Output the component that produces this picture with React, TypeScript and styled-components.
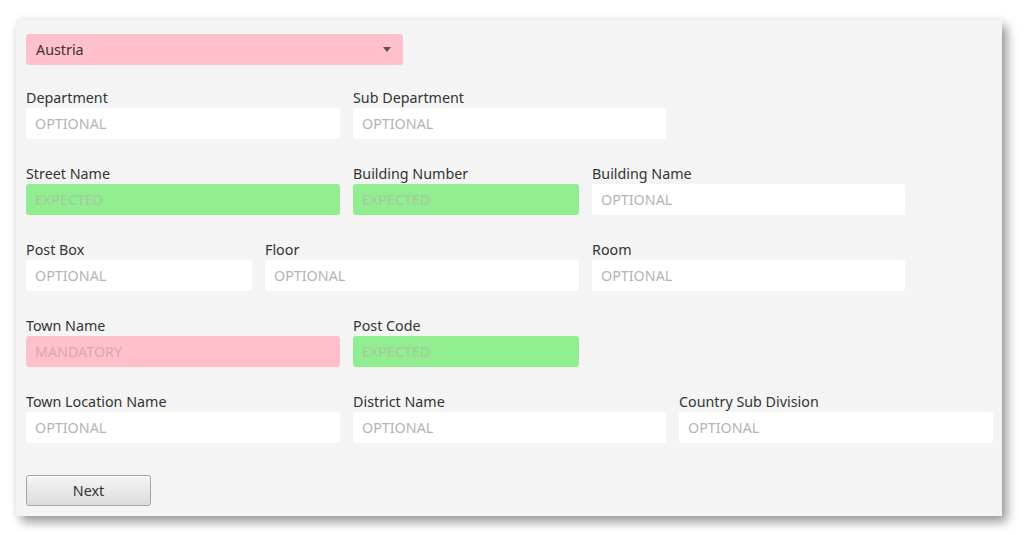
import React from "react";
import styled, { createGlobalStyle } from "styled-components";

const GlobalStyle = createGlobalStyle`
  html, body {
    margin: 0;
    padding: 0;
    background: #ffffff;
  }
  body {
    font-family: "Noto Sans", "Open Sans", sans-serif;
  }
`;

const Page = styled.div`
  padding: 20px 22px 19px 16px;
`;

const Panel = styled.div`
  width: 986px;
  height: 496px;
  box-sizing: border-box;
  background: #f4f4f4;
  padding: 14px 10px 10px 10px;
  box-shadow: 5px 6px 10px rgba(0, 0, 0, 0.4), 0 -2px 8px rgba(0, 0, 0, 0.05);
  display: flex;
  flex-direction: column;
`;

const Combo = styled.div`
  width: 377px;
  height: 32px;
  box-sizing: border-box;
  background: #ffc0cb;
  border-radius: 3px;
  display: flex;
  align-items: center;
  justify-content: space-between;
  padding: 0 12px 0 10px;
  font-size: 14.3px;
  color: #333;
`;

const Arrow = styled.span`
  width: 0;
  height: 0;
  border-left: 4.5px solid transparent;
  border-right: 4.5px solid transparent;
  border-top: 5px solid #555;
`;

const Grid = styled.div`
  margin-top: 24px;
  display: grid;
  grid-template-columns: 226px 75px 226px 74px 226px 75px;
  column-gap: 13px;
  row-gap: 26px;
`;

const Field = styled.div<{ $col: number; $span: number }>`
  grid-column: ${({ $col, $span }) => `${$col} / span ${$span}`};
  display: flex;
  flex-direction: column;
`;

const Label = styled.label`
  height: 18px;
  line-height: 18px;
  margin-bottom: 1px;
  font-size: 14.3px;
  color: #333;
`;

const kindBg: Record<string, string> = {
  optional: "#ffffff",
  expected: "#90ee90",
  mandatory: "#ffc0cb",
};

const kindText: Record<string, string> = {
  optional: "#b4b4b4",
  expected: "#a8c8a0",
  mandatory: "#d8a8ae",
};

const Input = styled.div<{ $kind: string }>`
  height: 31px;
  box-sizing: border-box;
  border-radius: 3px;
  background: ${({ $kind }) => kindBg[$kind]};
  color: ${({ $kind }) => kindText[$kind]};
  display: flex;
  align-items: center;
  padding-left: 9px;
  font-size: 14.3px;
`;

const Footer = styled.div`
  margin-top: 32px;
`;

const Button = styled.button`
  width: 125px;
  height: 31px;
  border: 1px solid #a6a6a6;
  border-radius: 3px;
  background: linear-gradient(#f4f4f4, #dcdcdc);
  font-family: "Noto Sans", "Open Sans", sans-serif;
  font-size: 14.3px;
  color: #333;
  box-shadow: inset 0 1px 0 #ffffff;
`;

type Kind = "optional" | "expected" | "mandatory";

const fields: { label: string; col: number; span: number; kind: Kind }[] = [
  { label: "Department", col: 1, span: 2, kind: "optional" },
  { label: "Sub Department", col: 3, span: 2, kind: "optional" },
  { label: "Street Name", col: 1, span: 2, kind: "expected" },
  { label: "Building Number", col: 3, span: 1, kind: "expected" },
  { label: "Building Name", col: 4, span: 2, kind: "optional" },
  { label: "Post Box", col: 1, span: 1, kind: "optional" },
  { label: "Floor", col: 2, span: 2, kind: "optional" },
  { label: "Room", col: 4, span: 2, kind: "optional" },
  { label: "Town Name", col: 1, span: 2, kind: "mandatory" },
  { label: "Post Code", col: 3, span: 1, kind: "expected" },
  { label: "Town Location Name", col: 1, span: 2, kind: "optional" },
  { label: "District Name", col: 3, span: 2, kind: "optional" },
  { label: "Country Sub Division", col: 5, span: 2, kind: "optional" },
];

const App: React.FC = () => {
  return (
    <>
      <GlobalStyle />
      <Page>
        <Panel>
          <Combo>
            Austria
            <Arrow />
          </Combo>
          <Grid>
            {fields.map((f) => (
              <Field key={f.label} $col={f.col} $span={f.span}>
                <Label>{f.label}</Label>
                <Input $kind={f.kind}>{f.kind.toUpperCase()}</Input>
              </Field>
            ))}
          </Grid>
          <Footer>
            <Button>Next</Button>
          </Footer>
        </Panel>
      </Page>
    </>
  );
};

export default App;
